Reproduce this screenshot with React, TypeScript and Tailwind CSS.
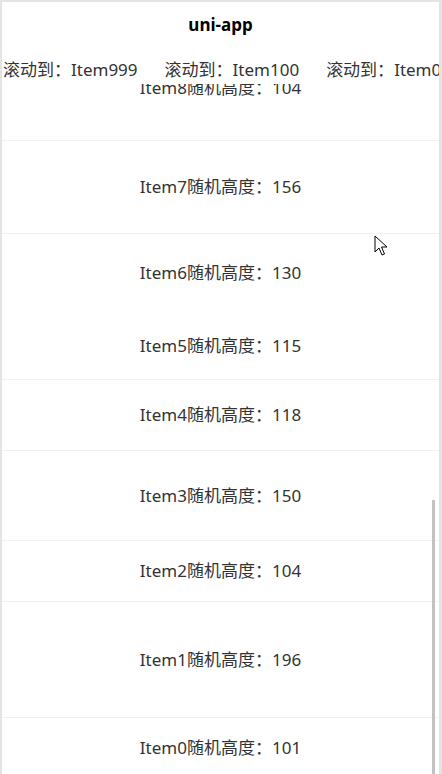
type item = {
    name: string,
    h: number,
    line: boolean
}

// heights in px as they sit on screen (random height * 0.6)
const items: item[] = [
    { name: "Item8随机高度：104", h: 106, line: true },
    { name: "Item7随机高度：156", h: 93, line: true },
    { name: "Item6随机高度：130", h: 78, line: false },
    { name: "Item5随机高度：115", h: 68, line: true },
    { name: "Item4随机高度：118", h: 71, line: true },
    { name: "Item3随机高度：150", h: 90, line: true },
    { name: "Item2随机高度：104", h: 61, line: true },
    { name: "Item1随机高度：196", h: 116, line: true },
    { name: "Item0随机高度：101", h: 61, line: true }
]

const targets = ["Item999", "Item100", "Item0"]

export default function App() {
    return (
        <div className="relative w-[442px] h-[774px] overflow-hidden bg-white border-l-2 border-t-2 border-r-[3px] border-[#e4e4e4] text-[#333] font-['Noto_Sans','Noto_Sans_CJK_SC',sans-serif] flex flex-col">
            <div className="h-[46px] shrink-0 flex items-center justify-center font-bold text-[17px] text-black">uni-app</div>

            <div className="h-[36px] shrink-0 flex items-center gap-[27px] whitespace-nowrap overflow-hidden pl-[1px] pt-[8px] text-[17px]">
                {targets.map((t) => (
                    <span key={t}>滚动到：{t}</span>
                ))}
            </div>

            <div className="flex-1 overflow-hidden">
                {items.map((it, index) => (
                    <div
                        key={it.name}
                        className={`flex items-center justify-center text-[17px] ${it.line ? "border-b border-[#f0f0f0]" : ""} ${index === 0 ? "-mt-[49px]" : ""}`}
                        style={{ height: it.h }}
                    >
                        {it.name}
                    </div>
                ))}
            </div>

            <div className="absolute right-[4px] top-[498px] w-[3px] h-[280px] bg-[#c2c2c2]"></div>

            <svg className="absolute left-[372px] top-[233px]" width="14" height="22" viewBox="0 0 14 22">
                <path d="M1 1 L1 17 L5 13 L8 20 L10.5 19 L7.5 12 L13 12 Z" fill="#fff" stroke="#000" strokeWidth="1" strokeLinejoin="miter" />
            </svg>
        </div>
    )
}
